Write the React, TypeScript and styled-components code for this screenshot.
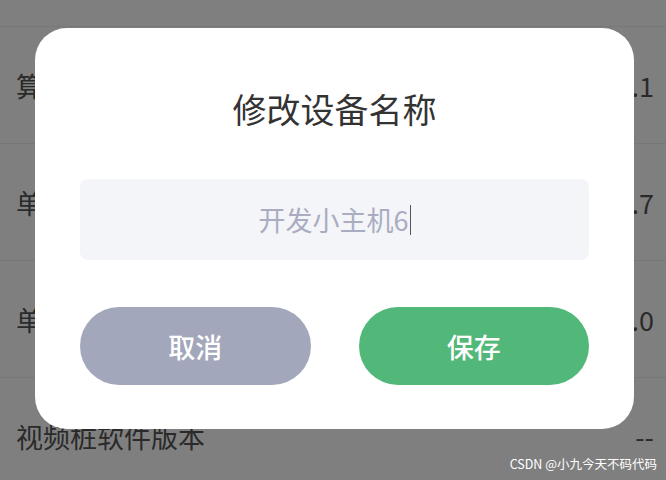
import styled, { createGlobalStyle } from "styled-components";

const GlobalStyle = createGlobalStyle`
  html, body {
    margin: 0;
    padding: 0;
    height: 100%;
    overflow: hidden;
  }
  body {
    font-family: "Noto Sans CJK SC", "Noto Sans", sans-serif;
    background: #ffffff;
  }
`;

const Page = styled.div`
  width: 666px;
  height: 480px;
  position: relative;
  overflow: hidden;
  background: #ffffff;
`;

const InfoList = styled.ul`
  list-style: none;
  margin: 0;
  padding: 26px 0 0;
`;

const InfoRow = styled.li`
  display: flex;
  align-items: center;
  justify-content: space-between;
  height: 117px;
  padding: 0 12px 0 16px;
  border-top: 1px solid #eeeeee;
  box-sizing: border-box;
  color: #555555;
  font-size: 27px;
`;

const Mask = styled.div`
  position: absolute;
  inset: 0;
  background: rgba(0, 0, 0, 0.5);
`;

const Dialog = styled.div`
  position: absolute;
  left: 35px;
  top: 28px;
  width: 599px;
  height: 401px;
  box-sizing: border-box;
  padding: 60px 45px 0;
  background: #ffffff;
  border-radius: 32px;
  display: flex;
  flex-direction: column;
  align-items: stretch;
`;

const Title = styled.h2`
  margin: 0;
  font-size: 34px;
  line-height: 41px;
  font-weight: 400;
  color: #333333;
  text-align: center;
`;

const NameField = styled.div`
  margin-top: 50px;
  height: 81px;
  border-radius: 8px;
  background: #f4f5f8;
  display: flex;
  align-items: center;
  justify-content: center;
  font-size: 27px;
  color: #aaadc1;
`;

const Caret = styled.span`
  display: inline-block;
  width: 1px;
  height: 30px;
  margin-left: 1px;
  background: #555555;
`;

const Actions = styled.div`
  margin-top: 47px;
  display: flex;
  justify-content: space-between;
  gap: 48px;
`;

const ActionButton = styled.button<{ $primary?: boolean }>`
  flex: 1;
  height: 78px;
  border: 0;
  border-radius: 39px;
  background: ${props => (props.$primary ? "#52b879" : "#a3a7bb")};
  color: #ffffff;
  font-family: inherit;
  font-size: 27px;
  font-weight: 500;
  cursor: pointer;
`;

const Watermark = styled.div`
  position: absolute;
  right: 9px;
  bottom: 7px;
  color: #ffffff;
  font-size: 12.5px;
  font-family: "Noto Sans CJK SC", "Noto Sans", sans-serif;
`;

const rows = [
  { label: "算法版本", value: "V1.1" },
  { label: "单片机版本", value: "V1.7" },
  { label: "单元版本", value: "V1.0" },
  { label: "视频桩软件版本", value: "--" },
];

function App() {
  return (
    <Page>
      <GlobalStyle />
      <InfoList>
        {rows.map(row => (
          <InfoRow key={row.label}>
            <span>{row.label}</span>
            <span>{row.value}</span>
          </InfoRow>
        ))}
      </InfoList>
      <Mask />
      <Dialog>
        <Title>修改设备名称</Title>
        <NameField>
          开发小主机6
          <Caret />
        </NameField>
        <Actions>
          <ActionButton>取消</ActionButton>
          <ActionButton $primary>保存</ActionButton>
        </Actions>
      </Dialog>
      <Watermark>CSDN @小九今天不码代码</Watermark>
    </Page>
  );
}

export default App;
